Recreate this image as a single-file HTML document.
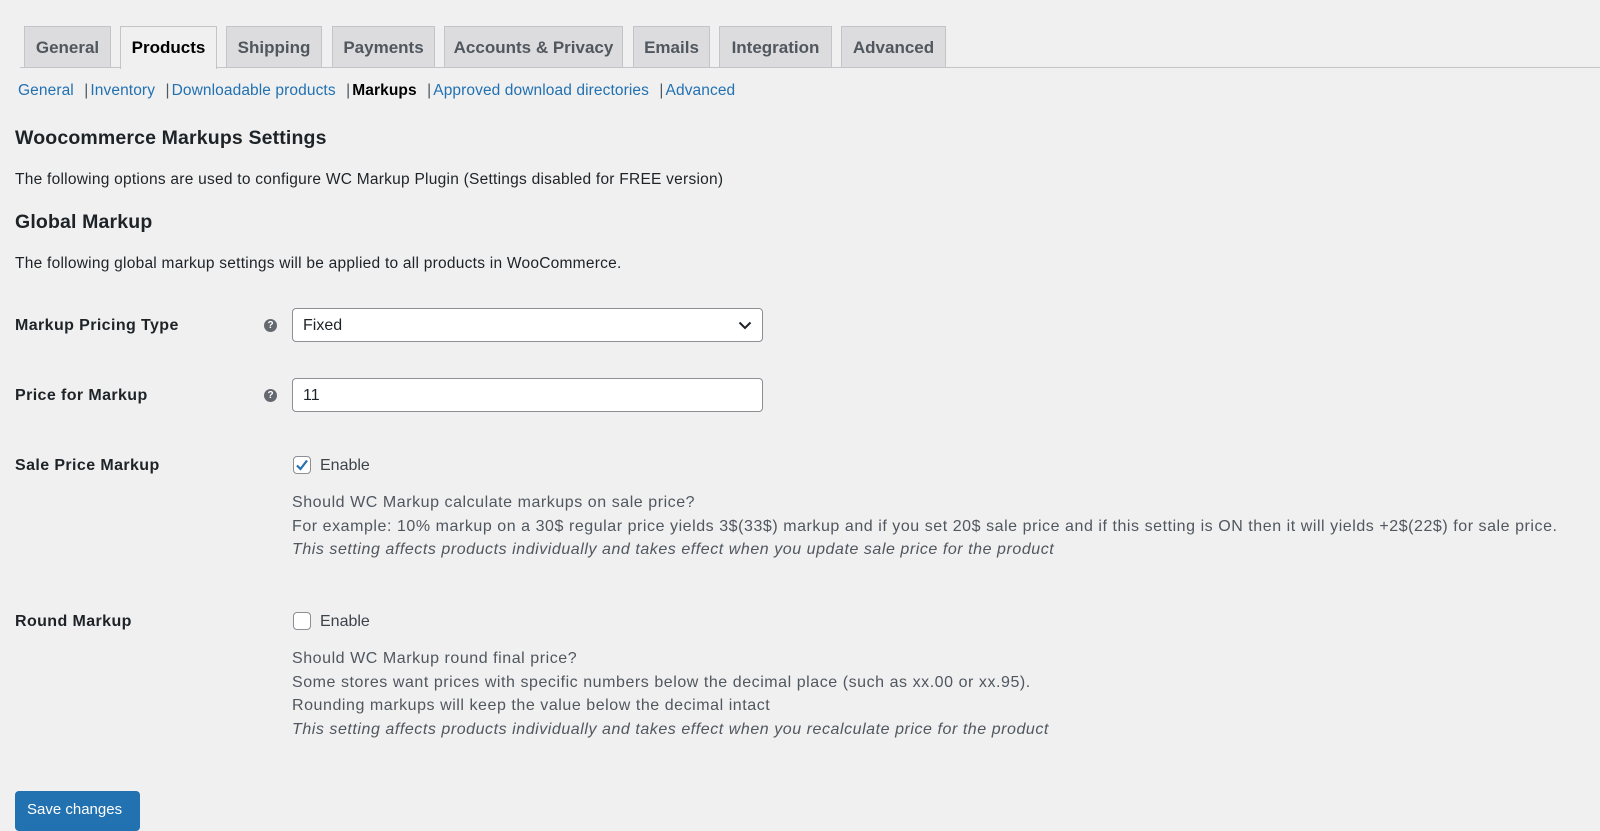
<!DOCTYPE html>
<html><head><meta charset="utf-8"><style>
body{margin:0;width:1600px;height:805px;background:#f0f0f1;font-family:"Liberation Sans",sans-serif;color:#1d2327;position:relative;overflow:hidden}
.a{position:absolute;white-space:nowrap}
.tab{position:absolute;top:26px;height:41px;background:#dcdcde;border:1px solid #c3c4c7;border-bottom:none;box-sizing:border-box;font-weight:bold;font-size:17px;color:#50575e;text-align:center;line-height:41px}
.tab.on{background:#f0f0f1;color:#000;height:43px}
.line{position:absolute;left:20px;top:67px;width:1580px;height:1px;background:#c3c4c7}
.sub{top:82px;left:18px;font-size:15.5px;letter-spacing:0.1px;color:#2271b1}
.sub b{color:#000}
.sub .s{color:#50575e;margin:0 2px 0 6px}
h2{position:absolute;margin:0;font-size:19.5px;letter-spacing:0.15px;left:15px;white-space:nowrap}
.p{font-size:15.5px;letter-spacing:0.25px;left:15px}
.lab{font-size:16px;letter-spacing:0.4px;font-weight:bold;left:15px}
.help{position:absolute;left:264px;width:13px;height:13px;border-radius:50%;background:#646970;color:#fff;font-size:10px;font-weight:bold;text-align:center;line-height:13px}
.box{position:absolute;left:292px;width:471px;height:34px;background:#fff;border:1px solid #8c8f94;border-radius:4px;box-sizing:border-box;font-size:16px;line-height:33px;padding-left:10px}
.cb{position:absolute;left:293px;width:18px;height:18px;border:1px solid #8c8f94;border-radius:4px;background:#fff;box-sizing:border-box}
.d{left:292px;font-size:16px;letter-spacing:0.55px;color:#50575e;line-height:23.5px}
</style></head><body>
<div class="line"></div>
<div class="tab" style="left:24px;width:87px">General</div>
<div class="tab on" style="left:120px;width:97px">Products</div>
<div class="tab" style="left:226px;width:96px">Shipping</div>
<div class="tab" style="left:332px;width:103px">Payments</div>
<div class="tab" style="left:444px;width:179px">Accounts &amp; Privacy</div>
<div class="tab" style="left:633px;width:77px">Emails</div>
<div class="tab" style="left:719px;width:113px">Integration</div>
<div class="tab" style="left:841px;width:105px">Advanced</div>
<div class="a sub">General <span class="s">|</span>Inventory <span class="s">|</span>Downloadable products <span class="s">|</span><b>Markups</b> <span class="s">|</span>Approved download directories <span class="s">|</span>Advanced</div>
<h2 style="top:127px">Woocommerce Markups Settings</h2>
<div class="a p" style="top:171px">The following options are used to configure WC Markup Plugin (Settings disabled for FREE version)</div>
<h2 style="top:211px">Global Markup</h2>
<div class="a p" style="top:255px">The following global markup settings will be applied to all products in WooCommerce.</div>
<div class="a lab" style="top:317px">Markup Pricing Type</div>
<div class="help" style="top:319px">?</div>
<div class="box" style="top:308px">Fixed<svg style="position:absolute;right:10px;top:12px" width="14" height="9" viewBox="0 0 14 9"><path d="M1.5 1.5 7 7l5.5-5.5" fill="none" stroke="#1d2327" stroke-width="2"/></svg></div>
<div class="a lab" style="top:387px">Price for Markup</div>
<div class="help" style="top:389px">?</div>
<div class="box" style="top:378px">11</div>
<div class="a lab" style="top:457px">Sale Price Markup</div>
<div class="cb" style="top:456px"><svg width="16" height="16" viewBox="0 0 16 16" style="position:absolute;left:0;top:0"><path d="M3 8.5 6.5 12 13 3.5" fill="none" stroke="#2271b1" stroke-width="2.2"/></svg></div>
<div class="a" style="left:320px;top:457px;font-size:16px;color:#3c434a">Enable</div>
<div class="a d" style="top:491px">Should WC Markup calculate markups on sale price?<br>For example: 10% markup on a 30$ regular price yields 3$(33$) markup and if you set 20$ sale price and if this setting is ON then it will yields +2$(22$) for sale price.<br><i>This setting affects products individually and takes effect when you update sale price for the product</i></div>
<div class="a lab" style="top:613px">Round Markup</div>
<div class="cb" style="top:612px"></div>
<div class="a" style="left:320px;top:613px;font-size:16px;color:#3c434a">Enable</div>
<div class="a d" style="top:647px">Should WC Markup round final price?<br>Some stores want prices with specific numbers below the decimal place (such as xx.00 or xx.95).<br>Rounding markups will keep the value below the decimal intact<br><i>This setting affects products individually and takes effect when you recalculate price for the product</i></div>
<div style="position:absolute;left:15px;top:791px;width:125px;height:40px;background:#2271b1;border-radius:4px;color:#fff;font-size:15px;padding:10px 12px;box-sizing:border-box">Save changes</div>
</body></html>
